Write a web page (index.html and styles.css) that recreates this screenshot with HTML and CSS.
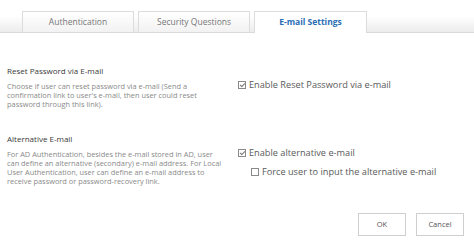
FILE: index.html
```html
<!DOCTYPE html>
<html lang="en">
<head>
    <meta charset="UTF-8">
    <title>E-mail Settings</title>
    <link rel="stylesheet" href="styles.css">
</head>
<body>
    <div class="tabs">
        <div class="tab">Authentication</div>
        <div class="tab">Security Questions</div>
        <div class="tab active">E-mail Settings</div>
    </div>

    <div class="settings">
        <div class="row">
            <div class="info">
                <div class="title">Reset Password via E-mail</div>
                <div class="desc">Choose if user can reset password via e-mail (Send a confirmation link to user's e-mail, then user could reset password through this link).</div>
            </div>
            <div class="options">
                <label class="check"><span class="box checked"></span>Enable Reset Password via e-mail</label>
            </div>
        </div>

        <div class="row">
            <div class="info">
                <div class="title">Alternative E-mail</div>
                <div class="desc">For AD Authentication, besides the e-mail stored in AD, user can define an alternative (secondary) e-mail address. For Local User Authentication, user can define an e-mail address to receive password or password-recovery link.</div>
            </div>
            <div class="options">
                <label class="check"><span class="box checked"></span>Enable alternative e-mail</label>
                <label class="check sub"><span class="box"></span>Force user to input the alternative e-mail</label>
            </div>
        </div>
    </div>

    <div class="actions">
        <button class="btn">OK</button>
        <button class="btn">Cancel</button>
    </div>
</body>
</html>
```

FILE: styles.css
```css
* {
    box-sizing: border-box;
}
body {
    margin: 0;
    font-family: "Open Sans", sans-serif;
    background-color: white;
    color: #444;
}
.tabs {
    display: flex;
    align-items: flex-end;
    gap: 4px;
    height: 33px;
    padding-left: 22px;
    border-bottom: 1px solid #d9d9d9;
    background: linear-gradient(#fff 50%, #ececec);
}
.tab {
    width: 112px;
    height: 21px;
    border: 1px solid #dcdcdc;
    border-bottom: none;
    background: linear-gradient(#fff, #f2f2f2);
    color: #777;
    font-size: 8.5px;
    line-height: 20px;
    text-align: center;
}
.tab.active {
    width: 113px;
    height: 22px;
    margin-bottom: -1px;
    background: white;
    color: #2a6db3;
    font-weight: bold;
}
.settings {
    padding: 32px 0 0 7px;
}
.row {
    display: flex;
}
.row + .row {
    margin-top: 25px;
}
.info {
    width: 216px;
}
.title {
    font-size: 8px;
    color: #3a3a3a;
    line-height: 12px;
    margin-bottom: 5px;
}
.desc {
    font-size: 7.4px;
    line-height: 8.8px;
    color: #8a8a8a;
}
.options {
    padding-left: 15px;
    padding-top: 13px;
    display: flex;
    flex-direction: column;
    gap: 6px;
}
.check {
    display: flex;
    align-items: center;
    font-size: 9.2px;
    color: #5a5a5a;
    line-height: 13px;
}
.check.sub {
    padding-left: 13px;
}
.box {
    width: 8px;
    height: 8px;
    border: 1px solid #8a8a8a;
    margin-right: 3px;
    position: relative;
}
.box.checked::after {
    content: "";
    position: absolute;
    left: 2px;
    top: 0px;
    width: 2px;
    height: 4px;
    border: solid #777;
    border-width: 0 1px 1px 0;
    transform: rotate(45deg);
}
.actions {
    display: flex;
    justify-content: flex-end;
    gap: 10px;
    padding-right: 10px;
    margin-top: 27px;
}
.btn {
    width: 48px;
    height: 23px;
    border: 1px solid #cfcfcf;
    background: white;
    color: #555;
    font-family: "Open Sans", sans-serif;
    font-size: 7.5px;
}
```
